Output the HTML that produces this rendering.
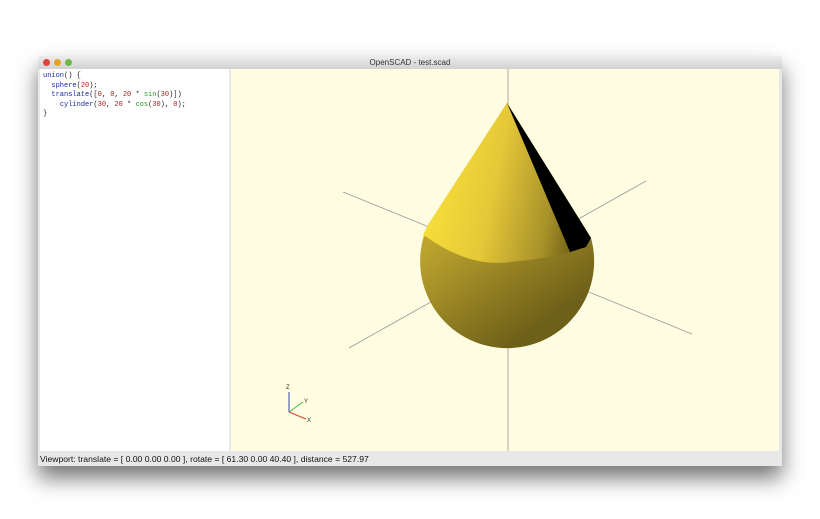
<!DOCTYPE html>
<html><head><style>
body{margin:0;width:820px;height:519px;background:#fff;position:relative;overflow:hidden;font-family:"Liberation Sans",sans-serif}
.win{position:absolute;left:38px;top:56px;width:744px;height:410px;background:#e8e8e8;box-shadow:0 12px 22px rgba(0,0,0,.55);border-radius:4px 4px 0 0}
.tb{position:absolute;left:0;top:0;width:744px;height:13px;background:linear-gradient(#ececec,#d2d2d2);border-radius:4px 4px 0 0;font-size:8px;color:#333;text-align:center;line-height:13px}
.dot{position:absolute;top:3px;width:7px;height:7px;border-radius:50%}
.ed{position:absolute;left:2px;top:13px;width:189px;height:382px;background:#fff;font-family:"Liberation Mono",monospace;font-size:7px;line-height:9.5px;color:#222;padding:3px 0 0 3px;box-sizing:border-box;white-space:pre}
.vp{position:absolute;left:193px;top:13px;width:548px;height:382px;background:#fefde2}
.st{position:absolute;left:2px;top:398px;font-size:8.6px;color:#111}
.k{color:#1a2a9a}.n{color:#a0201a}.f{color:#2a9a2a}
</style></head><body>
<div class="win">
<div class="tb">OpenSCAD - test.scad
<div class="dot" style="left:5px;background:#e0453b"></div><div class="dot" style="left:16px;background:#e4a42c"></div><div class="dot" style="left:27px;background:#6eb84a"></div></div>
<div class="ed"><span class="k">union</span>() {
  <span class="k">sphere</span>(<span class="n">20</span>);
  <span class="k">translate</span>([<span class="n">0</span>, <span class="n">0</span>, <span class="n">20</span> * <span class="f">sin</span>(<span class="n">30</span>)])
    <span class="k">cylinder</span>(<span class="n">30</span>, <span class="n">20</span> * <span class="f">cos</span>(<span class="n">30</span>), <span class="n">0</span>);
}</div>
<div class="vp"></div>
<div class="st">Viewport: translate = [ 0.00 0.00 0.00 ], rotate = [ 61.30 0.00 40.40 ], distance = 527.97</div>
</div>
<svg width="820" height="519" style="position:absolute;left:0;top:0">
<defs>
<linearGradient id="g" x1="0" y1="0" x2="1" y2="0.2">
<stop offset="0" stop-color="#ffe83a"/><stop offset=".5" stop-color="#e6c838"/><stop offset=".85" stop-color="#a8922a"/><stop offset="1" stop-color="#7a6a1a"/></linearGradient>
<linearGradient id="s" x1="0" y1="0" x2="0.5" y2="1">
<stop offset="0" stop-color="#f0d83a"/><stop offset=".55" stop-color="#b49c2c"/><stop offset="1" stop-color="#6e6018"/></linearGradient>
</defs>
<g stroke="#999" stroke-width="0.8">
<line x1="508" y1="69" x2="508" y2="451"/>
<line x1="343" y1="192" x2="692" y2="334"/>
<line x1="646" y1="181" x2="349" y2="348"/>
</g>
<path d="M428,225 A87,87 0 1 0 591,238 L507,103 Z" fill="url(#s)"/>
<path d="M507,103 L428,225 Q420,240 425,236 Q470,268 510,262 Q550,258 572,252 L591,238 Z" fill="url(#g)"/>
<path d="M507,103 L591,238 L586,247 L570,252 Z" fill="#000"/>
<g stroke-width="1">
<line x1="289" y1="412" x2="289" y2="392" stroke="#3344aa"/>
<line x1="289" y1="412" x2="303" y2="402" stroke="#44bb44"/>
<line x1="289" y1="412" x2="306" y2="419" stroke="#cc4433"/>
</g>
<g font-size="6" fill="#333"><text x="286" y="389">Z</text><text x="304" y="403">Y</text><text x="307" y="422">X</text></g>
</svg>
</body></html>
